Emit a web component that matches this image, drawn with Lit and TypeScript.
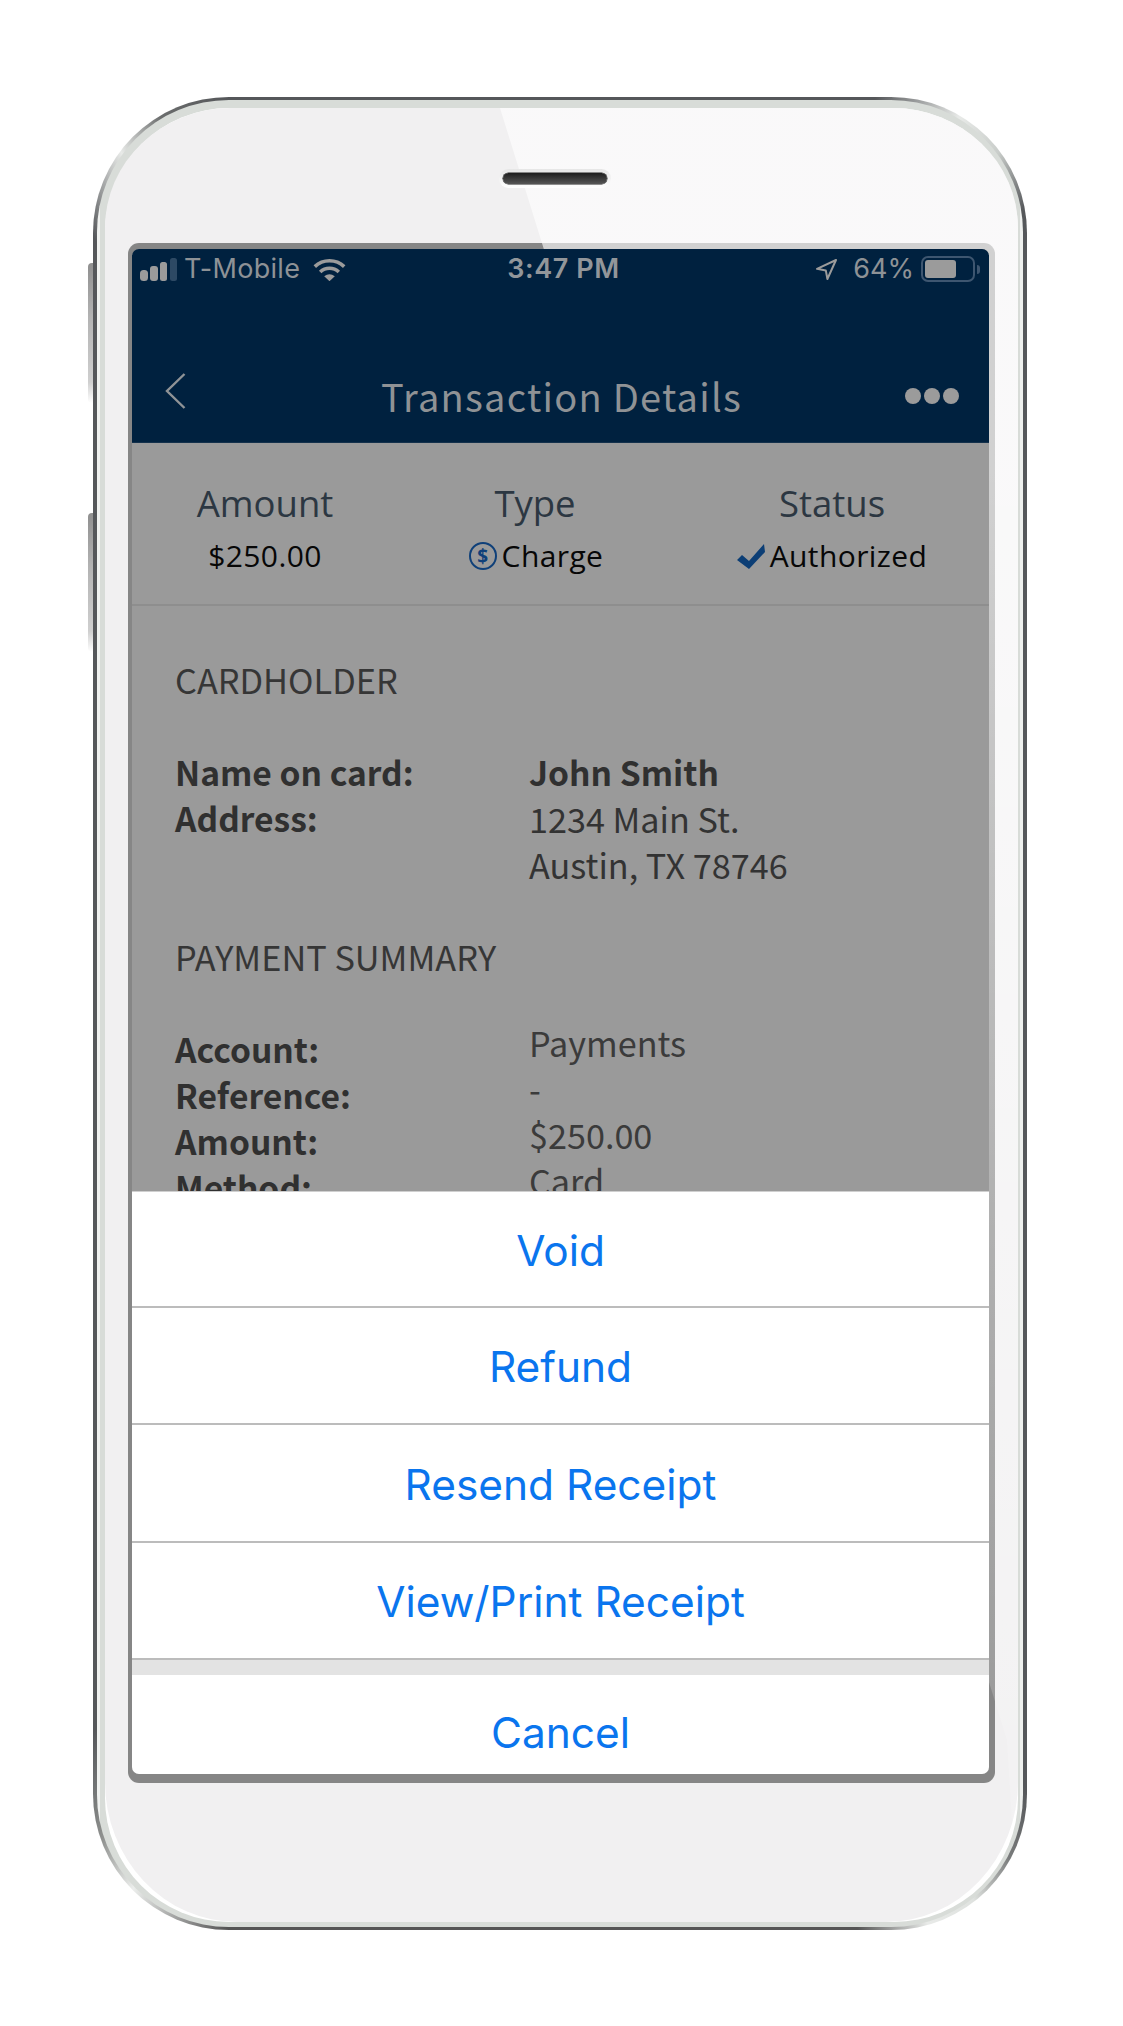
import { LitElement, html, css } from "lit";
import { customElement } from "lit/decorators.js";

@customElement("app-root")
export class AppRoot extends LitElement {
  static styles = css`
    :host { display: block; width: 1123px; height: 2026px; background: #fff; overflow: hidden; box-sizing: border-box; padding: 97px 96px 0 93px; }
    * { box-sizing: border-box; }
    .device { position: relative; width: 934px; height: 1833px; }
    .side { position: absolute; left: -5px; width: 5px; border-radius: 4px 0 0 4px; background: linear-gradient(180deg, #8f8f8f 0%, #b4b4b4 40%, #cfcfcf 85%, #fff 100%); }
    .side.a { top: 166px; height: 140px; }
    .side.b { top: 416px; height: 139px; }
    .edge { height: 100%; border-radius: 136px; padding: 3px 4px 3px 4px;
      background: conic-gradient(from 0deg at 50% 50%, #55575a 0deg, #55575a 19deg, #e8eae8 24deg, #c9cdca 27deg, #55575a 30deg, #55575a 149deg, #7a7c7c 152deg, #dfe2df 155deg, #e8eae8 158deg, #555 162deg, #555 200deg, #eceeec 206deg, #8f918f 209deg, #55575a 213deg, #55575a 329deg, #e8eae8 333deg, #6b6d6d 336deg, #55575a 340deg, #55575a 360deg); }
    .rim { height: 100%; border-radius: 132px; padding: 8px 5px 5px 8px; background: linear-gradient(90deg, #f0f2f0 0, #f0f2f0 3px, #d8dcd8 3px, #d8dcd8 calc(100% - 3px), #eef0ee calc(100% - 3px)); }
    .crescent { height: 100%; border-radius: 124px; background: #fff; }
    .body { position: relative; isolation: isolate; height: 100%; border-radius: 126px 126px 132px 132px / 120px 120px 140px 140px; background: #f1f0f1; padding: 135px 23px 0 23px; overflow: hidden; }
    .reflect { position: absolute; inset: 0; z-index: 1; pointer-events: none; background: linear-gradient(180deg, rgba(255,255,255,.62) 0%, rgba(255,255,255,.62) 20%, rgba(255,255,255,.2) 85%, rgba(255,255,255,.08) 100%); clip-path: polygon(395px 0, 100% 0, 100% 100%, 902px 1632px); }
    .speaker { position: absolute; left: 394px; top: 61px; width: 112px; height: 19px; border-radius: 10px; padding: 4px; background: linear-gradient(180deg, #e6e6e6, #fff); z-index: 2; }
    .speaker i { display: block; height: 11px; border-radius: 6px; background: linear-gradient(180deg, #1d1d1d, #565656); box-shadow: 0 0 0 .5px #222; }
    .frame { height: 1540px; border-radius: 11px; background: #868686; padding: 6px 6px 9px 4px; }
    .screen { position: relative; z-index: 2; height: 100%; border-radius: 7px; overflow: hidden; display: flex; flex-direction: column; background: #9a9a9a; }
    .nav { flex: none; height: 194px; background: #00213f; color: #8e9296; border-bottom: 1px solid #14314c; }
    .status { display: grid; grid-template-columns: 1fr auto 1fr; align-items: center; height: 40px; padding: 0 9px 0 8px; font: 400 27px/30px Inter, sans-serif; }
    .st-l { display: flex; align-items: center; gap: 7px; }
    .st-l .carrier { margin-right: 5.5px; letter-spacing: .3px; }
    .time { font-weight: 600; padding-left: 7px; color: #92969a; letter-spacing: .6px; }
    .st-r { display: flex; align-items: center; justify-content: flex-end; gap: 7px; }
    .st-r .loc { margin-right: 8px; }
    .battery { position: relative; width: 54px; height: 26px; border: 2px solid #3e5670; border-radius: 7px; padding: 2px; }
    .battery b { display: block; width: 31px; height: 18px; background: #9b9b9b; border-radius: 3px; }
    .nub { width: 3px; height: 9px; background: #3e5670; border-radius: 0 3px 3px 0; margin-left: -5px; }
    .head { display: grid; grid-template-columns: 120px 1fr 120px; align-items: center; height: 153px; padding-top: 60px; }
    .back { padding-left: 33px; display: flex; padding-bottom: 10px; }
    .title { text-align: center; font: 400 38px/48px "Noto Sans CJK SC", sans-serif; color: #8f9295; letter-spacing: 1.25px; padding-left: 2px; }
    .dots { display: flex; gap: 3px; justify-content: flex-end; padding-right: 30px; }
    .dots i { width: 16px; height: 16px; border-radius: 50%; background: #9b9b9b; }
    .content { flex: 1; min-height: 0; overflow: hidden; font-family: "Noto Sans CJK SC", sans-serif; }
    .summary { display: grid; grid-template-columns: 266px 274px 1fr; height: 163px; padding-top: 35px; border-bottom: 2px solid #8e8e8e; text-align: center; font-family: "Open Sans", sans-serif; }
    .summary > div:last-child { padding-left: 3px; }
    .s-label { font-weight: 400; font-size: 36.5px; line-height: 50px; color: #2c3742; }
    .s-value { display: flex; justify-content: center; align-items: center; gap: 5px; font-size: 30px; line-height: 40px; margin-top: 8px; color: #070707; letter-spacing: .4px; }
    .summary > div:nth-child(2) .s-value { padding-left: 2px; }
    .coin { width: 28px; height: 28px; border: 2px solid #0f4079; border-radius: 50%; color: #0f4079; font-size: 19px; font-weight: 700; line-height: 24px; text-align: center; letter-spacing: 0; }
    .details { padding: 50px 0 0 43px; color: #333; font-size: 34.2px; line-height: 46px; }
    .h { font-size: 34.3px; line-height: 46px; color: #363636; }
    .grid { display: grid; grid-template-columns: 354px 1fr; margin-top: 47px; }
    .b { font-weight: 700; color: #303030; font-size: 33.6px; }
    .grid.pay { margin-top: 47px; }
    .pay-v { margin-top: -7px; color: #3b3b3b; }
    .h.second { margin-top: 46px; }
    .sheet { flex: none; height: 583px; background: #fff; font: 400 42.4px/48px Inter, sans-serif; color: #0a75ee; border-top: 1px solid #cfcfcf; }
    .row { display: flex; align-items: center; justify-content: center; text-align: center; height: 117.4px; border-bottom: 2px solid #bcbcbc; padding-top: 3px; }
    .row.first { height: 116px; }
    .gap { height: 15px; background: #e3e3e3; }
    .cancel { display: flex; align-items: center; justify-content: center; height: 100px; padding-top: 15px; }
  `;

  render() {
    return html`
      <div class="device">
        <span class="side a"></span><span class="side b"></span>
        <div class="edge"><div class="rim"><div class="crescent"><div class="body">
          <div class="reflect"></div>
          <div class="speaker"><i></i></div>
          <div class="frame"><div class="screen">
            <div class="nav">
              <div class="status">
                <div class="st-l">
                  <svg width="37" height="23" viewBox="0 0 37 23"><g fill="#9b9b9b"><rect x="0" y="12" width="8" height="11" rx="3.5"/><rect x="10" y="8" width="8" height="15" rx="3"/><rect x="20" y="4" width="7" height="19" rx="2.5"/></g><rect x="30" y="0" width="7" height="23" rx="2.5" fill="#2d4964"/></svg>
                  <span class="carrier">T-Mobile</span>
                  <svg width="33" height="23" viewBox="0 0 33 23" fill="none" stroke="#9b9b9b" stroke-width="3.6"><path d="M1.8 8.6A21.5 21.5 0 0 1 31.2 8.6"/><path d="M7.2 14A13.6 13.6 0 0 1 25.8 14"/><path d="M11.2 18.2Q16.5 14.2 21.8 18.2L16.5 23.2Z" fill="#9b9b9b" stroke="none"/></svg>
                </div>
                <div class="time">3:47 PM</div>
                <div class="st-r">
                  <svg class="loc" width="23" height="23" viewBox="0 0 23 23" fill="none" stroke="#9b9b9b" stroke-width="2" stroke-linejoin="round"><path d="M21 2L2 10.8L10.8 12.4L12.4 21Z"/></svg>
                  <span>64%</span>
                  <div class="battery"><b></b></div>
                  <div class="nub"></div>
                </div>
              </div>
              <div class="head">
                <div class="back"><svg width="21" height="36" viewBox="0 0 21 36" fill="none" stroke="#8f9396" stroke-width="2.4"><path d="M19.5 1L2 18L19.5 35"/></svg></div>
                <div class="title">Transaction Details</div>
                <div class="dots"><i></i><i></i><i></i></div>
              </div>
            </div>
            <div class="content">
              <div class="summary">
                <div><div class="s-label">Amount</div><div class="s-value">$250.00</div></div>
                <div><div class="s-label">Type</div><div class="s-value"><span class="coin">$</span><span>Charge</span></div></div>
                <div><div class="s-label">Status</div><div class="s-value"><svg width="28" height="25" viewBox="0 0 28 25"><path d="M0 16L5 11L12 17L27 0L28 8L12 25Z" fill="#0c3e75"/></svg><span>Authorized</span></div></div>
              </div>
              <div class="details">
                <div class="h">CARDHOLDER</div>
                <div class="grid">
                  <div class="b">Name on card:</div><div class="b">John Smith</div>
                  <div class="b">Address:</div><div>1234 Main St.<br />Austin, TX 78746</div>
                </div>
                <div class="h second">PAYMENT SUMMARY</div>
                <div class="grid pay">
                  <div class="b">Account:<br />Reference:<br />Amount:<br />Method:</div>
                  <div class="pay-v">Payments<br />-<br />$250.00<br />Card</div>
                </div>
              </div>
            </div>
            <div class="sheet">
              <div class="row first">Void</div>
              <div class="row">Refund</div>
              <div class="row">Resend Receipt</div>
              <div class="row">View/Print Receipt</div>
              <div class="gap"></div>
              <div class="cancel">Cancel</div>
            </div>
          </div></div>
        </div></div></div></div>
      </div>
    `;
  }
}
